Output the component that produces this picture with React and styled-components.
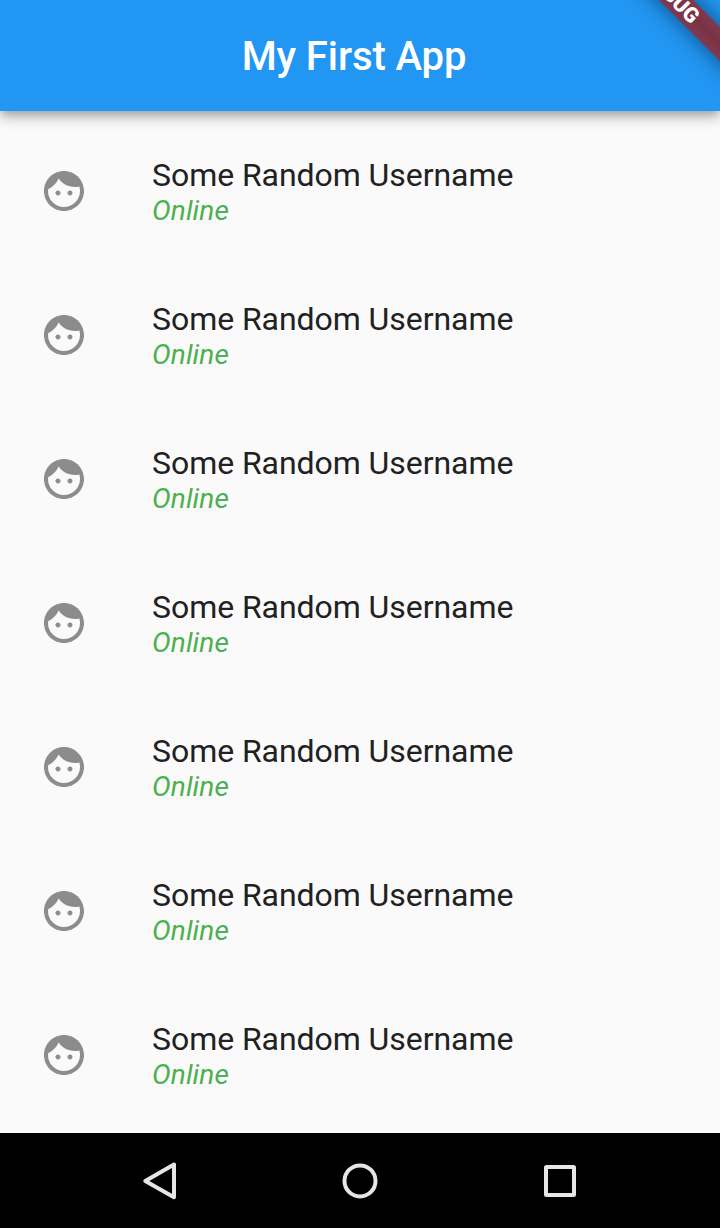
import React from 'react';
import styled, { createGlobalStyle } from 'styled-components';

const GlobalStyle = createGlobalStyle`
  * { box-sizing: border-box; }
  body { margin: 0; background: #fafafa; font-family: Roboto, sans-serif; }
`;

const Screen = styled.div`
  position: relative;
  display: flex;
  flex-direction: column;
  width: 720px;
  height: 1228px;
  overflow: hidden;
  background: #fafafa;
`;

const AppBar = styled.header`
  position: relative;
  flex: none;
  display: flex;
  justify-content: center;
  height: 111px;
  padding: 33px 12px 0 0;
  background: #2196f3;
  box-shadow: 0 4px 8px -2px rgba(0, 0, 0, 0.2), 0 8px 10px rgba(0, 0, 0, 0.14),
    0 2px 20px rgba(0, 0, 0, 0.12);
`;

const Title = styled.h1`
  margin: 0;
  color: #fff;
  font-size: 40px;
  font-weight: 500;
  letter-spacing: -0.1px;
  line-height: 47px;
  white-space: nowrap;
`;

const Banner = styled.div`
  position: absolute;
  left: 571.8px;
  top: -15.7px;
  width: 200px;
  height: 24px;
  transform: rotate(45deg);
  background: linear-gradient(#7d3a50, #7a3245 50%, #7d3a50);
  box-shadow: 0 0 22px rgba(0, 0, 0, 0.5);
  color: #fff;
  font-size: 21px;
  font-weight: 900;
  line-height: 24px;
  text-align: center;
`;

const List = styled.main`
  flex: 1;
  min-height: 0;
  padding-top: 8px;
  overflow: hidden;
`;

const Row = styled.article`
  display: flex;
  align-items: center;
  gap: 64px;
  height: 144px;
  padding-left: 40px;
`;

const FaceIcon = styled.svg`
  flex: none;
  width: 48px;
  height: 48px;
  fill: #8c8c8c;
`;

const UserText = styled.div`
  padding-top: 2px;
`;

const Name = styled.div`
  color: #212121;
  font-size: 32px;
  letter-spacing: -0.06px;
  line-height: 37px;
  white-space: nowrap;
`;

const Status = styled.div`
  color: #4caf50;
  font-size: 28px;
  font-style: italic;
  letter-spacing: 0.1px;
  line-height: 33px;
`;

const NavBar = styled.nav`
  flex: none;
  display: flex;
  align-items: flex-start;
  justify-content: center;
  gap: 152px;
  height: 95px;
  padding-top: 23px;
  background: #000;
`;

const NavIcon = styled.svg`
  width: 48px;
  height: 48px;
  fill: none;
  stroke: #e6e6e6;
  stroke-width: 4;
  stroke-linejoin: round;
`;

const users = Array.from({ length: 7 }, (_, id) => ({
  id,
  name: 'Some Random Username',
  status: 'Online',
}));

export default function App() {
  return (
    <>
      <GlobalStyle />
      <Screen>
        <AppBar>
          <Title>My First App</Title>
        </AppBar>
        <List>
          {users.map((user) => (
            <Row key={user.id}>
              <FaceIcon viewBox="0 0 24 24">
                <path d="M9 11.75c-.69 0-1.25.56-1.25 1.25s.56 1.25 1.25 1.25 1.25-.56 1.25-1.25-.56-1.25-1.25-1.25zm6 0c-.69 0-1.25.56-1.25 1.25s.56 1.25 1.25 1.25 1.25-.56 1.25-1.25-.56-1.25-1.25-1.25zM12 2C6.48 2 2 6.48 2 12s4.48 10 10 10 10-4.48 10-10S17.52 2 12 2zm0 18c-4.41 0-8-3.59-8-8 0-.29.02-.58.05-.86 2.36-1.05 4.23-2.98 5.21-5.37C11.07 8.33 14.05 10 17.42 10c.78 0 1.53-.09 2.25-.26.21.71.33 1.47.33 2.26 0 4.41-3.59 8-8 8z" />
              </FaceIcon>
              <UserText>
                <Name>{user.name}</Name>
                <Status>{user.status}</Status>
              </UserText>
            </Row>
          ))}
        </List>
        <NavBar>
          <NavIcon viewBox="0 0 48 48">
            <path d="M38 8.5V41.3L9.3 24.9Z" />
          </NavIcon>
          <NavIcon viewBox="0 0 48 48">
            <circle cx="24" cy="24.9" r="15.5" />
          </NavIcon>
          <NavIcon viewBox="0 0 48 48">
            <rect x="10" y="11" width="28" height="28" rx="0.5" />
          </NavIcon>
        </NavBar>
        <Banner>DEBUG</Banner>
      </Screen>
    </>
  );
}
